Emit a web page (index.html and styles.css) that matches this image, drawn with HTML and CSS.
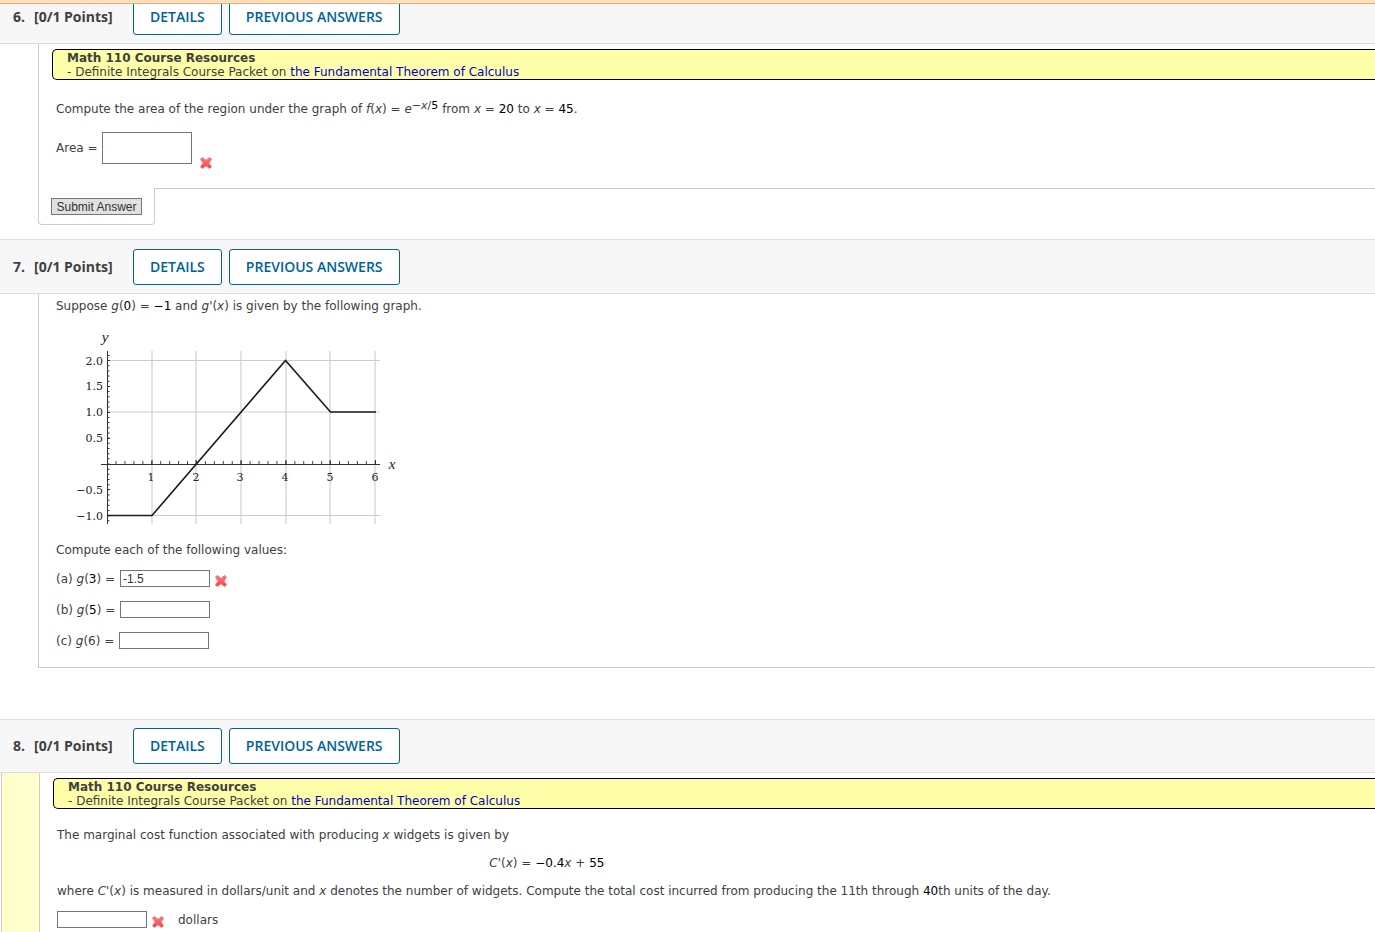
FILE: index.html
```html
<!DOCTYPE html>
<html lang="en">
<head>
<meta charset="utf-8">
<title>Math 110 Assignment</title>
<link rel="stylesheet" href="styles.css">
</head>
<body>
<svg class="defs" width="0" height="0" aria-hidden="true">
  <defs>
    <linearGradient id="red" x1="0" y1="0" x2="0" y2="1"><stop offset="0" stop-color="#fb8080"/><stop offset="1" stop-color="#f0444a"/></linearGradient>
    <symbol id="wrong" viewBox="0 0 12 12">
      <path d="M2.3 .5 6 3.4 9.7 .5 11.5 2.3 8.8 6 11.5 9.700 9.7 11.500 6 8.700 2.3 11.500 .5 9.700 3.3 6 .5 2.3Z" fill="url(#red)" stroke="#f5696c" stroke-width="1" stroke-linejoin="round"/>
    </symbol>
  </defs>
</svg>
<div class="topbar"></div>
<main class="assignment">
  <section class="question">
    <header class="question-head">
      <span class="number">6.</span><span class="points">[0/1 Points]</span>
      <button class="action" type="button">DETAILS</button>
      <button class="action" type="button">PREVIOUS ANSWERS</button>
    </header>
    <div class="body body-open">
      <div class="resources"><b>Math 110 Course Resources</b><br>- Definite Integrals Course Packet on <a href="#ftc">the Fundamental Theorem of Calculus</a></div>
      <p class="prompt">Compute the area of the region under the graph of <i>f</i>(<i>x</i>) = <i>e</i><sup>−<i>x</i>/<span class="num">5</span></sup> from <i>x</i> = <span class="num">20</span> to <i>x</i> = <span class="num">45</span>.</p>
      <div class="answer answer-tall">
        <label for="area">Area =</label><input class="field field-tall" id="area" type="text">
        <svg class="mark mark-low" role="img" aria-label="Incorrect"><use href="#wrong"/></svg>
      </div>
    </div>
    <div class="submit-row">
      <div class="submit-tab"><button class="submit" type="button">Submit Answer</button></div>
      <div class="submit-line"></div>
    </div>
  </section>

  <section class="question">
    <header class="question-head">
      <span class="number">7.</span><span class="points">[0/1 Points]</span>
      <button class="action" type="button">DETAILS</button>
      <button class="action" type="button">PREVIOUS ANSWERS</button>
    </header>
    <div class="body body-closed">
      <p class="prompt prompt-first">Suppose <i>g</i>(<span class="num">0</span>) = <span class="num">−1</span> and <i>g</i>'(<i>x</i>) is given by the following graph.</p>
      <svg class="graph" width="350" height="205" viewBox="56 325 350 205" role="img" aria-label="Graph of g prime">
        <g class="grid-v"><path d="M152 351V524M196 351V524M241 351V524M286 351V524M330 351V524M375 351V524"/></g>
        <g class="grid-h"><path d="M107 360.500H380M107 412H380M107 515.500H380"/></g>
        <path class="axis" d="M107.500 351V524M101 464.500H380"/>
        <path class="ticks-x" d="M115.500 462.500H376"/>
        <path class="ticks-y" d="M108.500 354.900V522"/>
        <path class="tick-major" d="M152 460V464M196 460V464M241 460V464M286 460V464M330 460V464M375.500 460V464M107 360.500h3M107 386.500h3M107 412.500h3M107 438.500h3M107 489.500h3M107 515.500h3"/>
        <path class="curve" d="M107 515.500H152L285.500 360.500 330.500 412H376"/>
        <g class="tick-label tick-label-y"><text x="103" y="365">2.0</text><text x="103" y="390">1.5</text><text x="103" y="416">1.0</text><text x="103" y="442">0.5</text><text x="103" y="494">−0.5</text><text x="103" y="520">−1.0</text></g>
        <g class="tick-label tick-label-x"><text x="151" y="481">1</text><text x="196" y="481">2</text><text x="240" y="481">3</text><text x="285" y="481">4</text><text x="330" y="481">5</text><text x="375" y="481">6</text></g>
        <g class="axis-label"><text x="105" y="342">y</text><text x="392" y="469">x</text></g>
      </svg>
      <p class="prompt prompt-values">Compute each of the following values:</p>
      <div class="answer"><label for="g3">(a) <i>g</i>(<span class="num">3</span>) =</label><input class="field" id="g3" type="text" value="-1.5"><svg class="mark" role="img" aria-label="Incorrect"><use href="#wrong"/></svg></div>
      <div class="answer"><label for="g5">(b) <i>g</i>(<span class="num">5</span>) =</label><input class="field" id="g5" type="text"></div>
      <div class="answer"><label for="g6">(c) <i>g</i>(6) =</label><input class="field" id="g6" type="text"></div>
    </div>
  </section>

  <section class="question question-flagged">
    <header class="question-head">
      <span class="number">8.</span><span class="points">[0/1 Points]</span>
      <button class="action" type="button">DETAILS</button>
      <button class="action" type="button">PREVIOUS ANSWERS</button>
    </header>
    <div class="flagged">
      <div class="body body-open">
        <div class="resources"><b>Math 110 Course Resources</b><br>- Definite Integrals Course Packet on <a href="#ftc">the Fundamental Theorem of Calculus</a></div>
        <p class="prompt">The marginal cost function associated with producing <i>x</i> widgets is given by</p>
        <div class="prose">
          <p class="equation"><i>C</i>'(<i>x</i>) = <span class="num">−0.4</span><i>x</i> + <span class="num">55</span></p>
          <p>where <i>C</i>'(<i>x</i>) is measured in dollars/unit and <i>x</i> denotes the number of widgets. Compute the total cost incurred from producing the 11th through <span class="num">40</span>th units of the day.</p>
        </div>
        <div class="answer"><input class="field" id="cost" type="text" aria-labelledby="unit"><svg class="mark" role="img" aria-label="Incorrect"><use href="#wrong"/></svg><label id="unit" class="unit" for="cost">dollars</label></div>
      </div>
    </div>
  </section>
</main>
</body>
</html>
```
FILE: styles.css
```css
* { box-sizing: border-box; }
body {
  margin: 0;
  background: #fff;
  color: #404040;
  font: 12px/14px Verdana, "DejaVu Sans", sans-serif;
  height: 100vh;
  overflow: hidden;
}
p { margin: 0; }
.defs { position: absolute; }
.num { color: #000; }

.topbar {
  position: absolute;
  inset: 0 0 auto;
  height: 4px;
  background: #ffdfb8;
  border-bottom: 1px solid #d2b48c;
  z-index: 1;
}
.assignment { margin-top: -11px; }

.question-head {
  display: flex;
  align-items: center;
  gap: 7px;
  height: 55px;
  padding-left: 13px;
  background: #f7f7f7;
  border-top: 1px solid #ddd;
  border-bottom: 1px solid #ddd;
  font: 14px/20px "Open Sans", sans-serif;
}
.number { width: 14px; font-weight: 700; }
.points { width: 92px; font-weight: 700; }
.action {
  height: 36px;
  padding: 0 16px;
  border: 1px solid #006298;
  border-radius: 3px;
  background: #fff;
  color: #006298;
  font: 600 14px/20px "Open Sans", sans-serif;
}

.body {
  margin-left: 38px;
  border-left: 1px solid #ccc;
}
.body-open { display: flow-root; padding-top: 5px; }
.body-closed {
  padding: 5px 0 18px;
  border-bottom: 1px solid #ccc;
  margin-bottom: 51px;
}
.resources {
  margin-left: 13px;
  padding: 1px 0 0 14px;
  background: #ffa;
  border: 1px solid #000;
  border-right: 0;
  border-radius: 5px 0 0 5px;
}
.resources a { color: #00c; text-decoration: none; }
.prompt { margin: 22px 0 0 17px; }
.prompt-first { margin-top: 0; }
.prompt sup { font-size: 11px; line-height: 0; vertical-align: 4px; }
.graph { display: block; margin: 12px 0 0 17px; }
.prompt-values { margin: 13px 0 13px 17px; }

.answer {
  display: flex;
  align-items: center;
  gap: 5px;
  height: 17px;
  margin: 0 0 14px 17px;
}
.answer:last-child { margin-bottom: 0; }
.answer-tall { height: 32px; margin-top: 16px; }
.answer-tall:last-child { margin-bottom: 24px; }
.field {
  width: 90px;
  height: 17px;
  padding: 0 2px;
  border: 1px solid #767676;
  background: #fff;
  color: #333;
  font: 12px/14px "Liberation Sans", Arial, sans-serif;
}
.field-tall { height: 32px; }
.mark { width: 12px; height: 12px; margin-top: 4px; }
.mark-low { align-self: flex-end; margin: 0 0 -5px 3px; }
.unit { margin-left: 9px; }

.submit-row { display: flex; height: 51px; }
.submit-tab {
  width: 117px;
  height: 37px;
  margin-left: 38px;
  padding: 10px 0 0 12px;
  border: 1px solid #ccc;
  border-top: 0;
  border-radius: 0 0 4px 4px;
}
.submit-line { flex: 1; border-top: 1px solid #ccc; }
.submit {
  display: block;
  width: 91px;
  height: 17px;
  padding: 0;
  border: 1px solid #767676;
  background: #e1e1e1;
  color: #333;
  font: 12px/14px "Liberation Sans", Arial, sans-serif;
}

.grid-v path { stroke: #e2e2e2; stroke-width: 2; }
.grid-h path { stroke: #ccc; }
.axis { stroke: #333; fill: none; }
.ticks-x { stroke: #444; stroke-width: 3; stroke-dasharray: 1 7.940; }
.ticks-y { stroke: #333; stroke-width: 2; stroke-dasharray: 1 4.170; }
.tick-major { stroke: #333; fill: none; }
.curve { stroke: #1a1a1a; stroke-width: 1.600; fill: none; }
.tick-label { font: 11px "DejaVu Serif", serif; fill: #222; }
.tick-label-x { text-anchor: middle; }
.tick-label-y { text-anchor: end; }
.axis-label { font: italic 15px "Liberation Serif", serif; fill: #222; text-anchor: middle; }

.question-flagged .question-head { height: 54px; }
.flagged {
  margin-left: 1px;
  border-left: 1px solid #ccc;
  background: #ffc;
}
.flagged .body {
  min-height: 170px;
  margin-left: 37px;
  background: #fff;
}
.flagged .prompt { margin-top: 19px; }
.prose { width: fit-content; max-width: 100%; margin: 14px 0 13px 17px; }
.equation { padding-right: 14px; margin-bottom: 14px; text-align: center; }
```
